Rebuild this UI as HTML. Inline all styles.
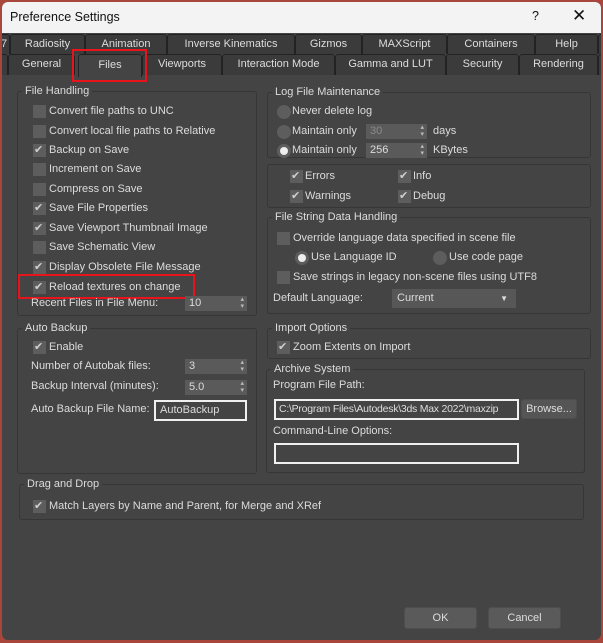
<!DOCTYPE html>
<html><head><style>
*{box-sizing:border-box;margin:0;padding:0}
body{width:603px;height:643px;background:#a8463c;position:relative;overflow:hidden;font-family:"Liberation Sans",sans-serif;font-size:11px;color:#dcdcdc}
.win{position:absolute;left:2px;top:2px;width:599px;height:638px;background:#444;border-radius:6px;overflow:hidden}
.title{position:absolute;left:0;top:0;width:599px;height:31px;background:#f3f3f3;color:#111;font-size:12.5px}
.a{position:absolute;white-space:nowrap}
.tab{position:absolute;background:#3b3b3b;border:1px solid #222;border-bottom:none;text-align:center;line-height:19px;color:#ddd;border-radius:3px 3px 0 0}
.grp{position:absolute;border:1px solid #363636;border-radius:3px}
.lg{position:absolute;background:#444;padding:0 3px;top:-8px;left:4px;white-space:nowrap;line-height:14px}
.cb{position:absolute;width:13px;height:13px;background:#5d5d5d}
.cb.c::after{content:"\2714";position:absolute;left:1px;top:-1px;font-size:11px;color:#cfcfcf}
.rb{position:absolute;width:14px;height:14px;border-radius:50%;background:#5d5d5d}
.rb.c::after{content:"";position:absolute;left:3px;top:3px;width:8px;height:8px;border-radius:50%;background:#eee}
.sp{position:absolute;height:15px;background:#5a5a5a;padding-left:4px;line-height:15px}
.sp::after{content:"\25B4\A\25BE";white-space:pre;position:absolute;right:3px;top:0;font-size:7px;line-height:7px;color:#bbb}
.dd{position:absolute;background:#575757;padding-left:5px}
.tb{position:absolute;border:2px solid #f0f0f0;background:#444;padding-left:4px;line-height:16px}
.btn{position:absolute;background:#5a5a5a;border:1px solid #4e4e4e;border-radius:3px;text-align:center;color:#ddd}
</style></head><body>
<div class="win">
<div class="title"><span class="a" style="left:8px;top:8px">Preference Settings</span><span class="a" style="left:530px;top:7px">?</span><span class="a" style="left:570px;top:4px;font-size:17px">✕</span></div>
<div class="tab" style="left:-4px;top:32px;width:12px;height:20px">7</div>
<div class="tab" style="left:8px;top:32px;width:75px;height:20px">Radiosity</div>
<div class="tab" style="left:83px;top:32px;width:82px;height:20px">Animation</div>
<div class="tab" style="left:165px;top:32px;width:128px;height:20px">Inverse Kinematics</div>
<div class="tab" style="left:293px;top:32px;width:67px;height:20px">Gizmos</div>
<div class="tab" style="left:360px;top:32px;width:85px;height:20px">MAXScript</div>
<div class="tab" style="left:445px;top:32px;width:88px;height:20px">Containers</div>
<div class="tab" style="left:533px;top:32px;width:63px;height:20px">Help</div>
<div class="tab" style="left:596px;top:32px;width:10px;height:20px"></div>
<div class="tab" style="left:-4px;top:52px;width:10px;height:21px"></div>
<div class="tab" style="left:6px;top:52px;width:67px;height:21px">General</div>
<div class="tab" style="left:140px;top:52px;width:80px;height:21px">Viewports</div>
<div class="tab" style="left:220px;top:52px;width:113px;height:21px">Interaction Mode</div>
<div class="tab" style="left:333px;top:52px;width:111px;height:21px">Gamma and LUT</div>
<div class="tab" style="left:444px;top:52px;width:73px;height:21px">Security</div>
<div class="tab" style="left:517px;top:52px;width:79px;height:21px">Rendering</div>
<div class="tab" style="left:596px;top:52px;width:10px;height:21px"></div>
<div class="tab" style="left:76px;top:52px;width:64px;height:23px;background:#444;line-height:20px">Files</div>
<div class="a" style="left:70px;top:47px;width:75px;height:33px;border:2px solid #e8141c"></div>

<div class="grp" style="left:15px;top:89px;width:240px;height:225px"><span class="lg">File Handling</span></div>
<div class="cb" style="left:31px;top:103px"></div><span class="a" style="left:47px;top:103px">Convert file paths to UNC</span>
<div class="cb" style="left:31px;top:123px"></div><span class="a" style="left:47px;top:123px">Convert local file paths to Relative</span>
<div class="cb c" style="left:31px;top:142px"></div><span class="a" style="left:47px;top:142px">Backup on Save</span>
<div class="cb" style="left:31px;top:161px"></div><span class="a" style="left:47px;top:161px">Increment on Save</span>
<div class="cb" style="left:31px;top:181px"></div><span class="a" style="left:47px;top:181px">Compress on Save</span>
<div class="cb c" style="left:31px;top:200px"></div><span class="a" style="left:47px;top:200px">Save File Properties</span>
<div class="cb c" style="left:31px;top:220px"></div><span class="a" style="left:47px;top:220px">Save Viewport Thumbnail Image</span>
<div class="cb" style="left:31px;top:239px"></div><span class="a" style="left:47px;top:239px">Save Schematic View</span>
<div class="cb c" style="left:31px;top:259px"></div><span class="a" style="left:47px;top:259px">Display Obsolete File Message</span>
<div class="cb c" style="left:31px;top:279px"></div><span class="a" style="left:47px;top:279px">Reload textures on change</span>
<div class="a" style="left:16px;top:272px;width:177px;height:25px;border:2px solid #e8141c"></div>
<span class="a" style="left:29px;top:295px">Recent Files in File Menu:</span><div class="sp" style="left:183px;top:294px;width:62px">10</div>

<div class="grp" style="left:15px;top:326px;width:240px;height:146px"><span class="lg">Auto Backup</span></div>
<div class="cb c" style="left:31px;top:339px"></div><span class="a" style="left:47px;top:339px">Enable</span>
<span class="a" style="left:29px;top:358px">Number of Autobak files:</span><div class="sp" style="left:183px;top:357px;width:62px">3</div>
<span class="a" style="left:29px;top:378px">Backup Interval (minutes):</span><div class="sp" style="left:183px;top:378px;width:62px">5.0</div>
<span class="a" style="left:29px;top:401px">Auto Backup File Name:</span><div class="tb" style="left:152px;top:398px;width:93px;height:21px">AutoBackup</div>

<div class="grp" style="left:265px;top:90px;width:324px;height:66px"><span class="lg">Log File Maintenance</span></div>
<div class="rb" style="left:275px;top:103px"></div><span class="a" style="left:290px;top:103px">Never delete log</span>
<div class="rb" style="left:275px;top:123px"></div><span class="a" style="left:290px;top:123px">Maintain only</span><div class="sp" style="left:364px;top:122px;width:61px;color:#8a8a8a">30</div><span class="a" style="left:431px;top:123px">days</span>
<div class="rb c" style="left:275px;top:142px"></div><span class="a" style="left:290px;top:142px">Maintain only</span><div class="sp" style="left:364px;top:141px;width:61px">256</div><span class="a" style="left:431px;top:142px">KBytes</span>
<div class="grp" style="left:265px;top:162px;width:324px;height:44px"></div>
<div class="cb c" style="left:288px;top:168px"></div><span class="a" style="left:303px;top:168px">Errors</span>
<div class="cb c" style="left:396px;top:168px"></div><span class="a" style="left:411px;top:168px">Info</span>
<div class="cb c" style="left:288px;top:188px"></div><span class="a" style="left:303px;top:188px">Warnings</span>
<div class="cb c" style="left:396px;top:188px"></div><span class="a" style="left:411px;top:188px">Debug</span>

<div class="grp" style="left:265px;top:215px;width:324px;height:97px"><span class="lg">File String Data Handling</span></div>
<div class="cb" style="left:275px;top:230px"></div><span class="a" style="left:291px;top:230px">Override language data specified in scene file</span>
<div class="rb c" style="left:293px;top:249px"></div><span class="a" style="left:309px;top:249px">Use Language ID</span>
<div class="rb" style="left:431px;top:249px"></div><span class="a" style="left:447px;top:249px">Use code page</span>
<div class="cb" style="left:275px;top:269px"></div><span class="a" style="left:291px;top:269px">Save strings in legacy non-scene files using UTF8</span>
<span class="a" style="left:271px;top:290px">Default Language:</span>
<div class="dd" style="left:390px;top:287px;width:124px;height:19px;line-height:19px">Current<span class="a" style="right:8px;top:0;font-size:8px">▼</span></div>

<div class="grp" style="left:265px;top:326px;width:324px;height:31px"><span class="lg">Import Options</span></div>
<div class="cb c" style="left:275px;top:339px"></div><span class="a" style="left:291px;top:339px">Zoom Extents on Import</span>

<div class="grp" style="left:264px;top:367px;width:319px;height:104px"><span class="lg">Archive System</span></div>
<span class="a" style="left:271px;top:377px">Program File Path:</span>
<div class="tb" style="left:272px;top:397px;width:245px;height:21px;overflow:hidden;white-space:nowrap;font-size:10.5px;letter-spacing:-0.25px;padding-left:3px">C:\Program Files\Autodesk\3ds Max 2022\maxzip</div>
<div class="btn" style="left:519px;top:397px;width:56px;height:20px;line-height:18px;background:#555">Browse...</div>
<span class="a" style="left:271px;top:423px">Command-Line Options:</span>
<div class="tb" style="left:272px;top:441px;width:245px;height:21px"></div>

<div class="grp" style="left:17px;top:482px;width:565px;height:36px"><span class="lg">Drag and Drop</span></div>
<div class="cb c" style="left:31px;top:498px"></div><span class="a" style="left:47px;top:498px">Match Layers by Name and Parent, for Merge and XRef</span>

<div class="btn" style="left:402px;top:605px;width:73px;height:22px;line-height:20px">OK</div>
<div class="btn" style="left:486px;top:605px;width:73px;height:22px;line-height:20px">Cancel</div>
</div>
</body></html>
